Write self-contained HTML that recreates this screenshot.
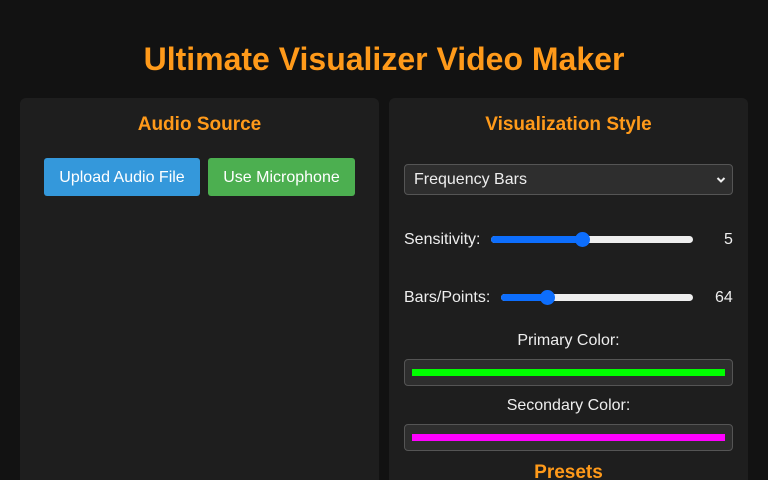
<!DOCTYPE html>
<html style="overflow:hidden;height:480px"><head><style>
*{margin:0;padding:0;box-sizing:border-box}
body{width:768px;height:480px;background:#121212;font-family:"Liberation Sans",sans-serif;color:#eee;position:relative;overflow:hidden}
.a{position:absolute}
.panel{position:absolute;top:98px;width:359px;height:382px;background:#1e1e1e;border-radius:6px 6px 0 0}
h1{position:absolute;top:41px;width:768px;text-align:center;font-size:32px;color:#ff9a1a;font-weight:bold}
.h2{position:absolute;width:359px;text-align:center;font-size:19px;font-weight:bold;color:#ff9a1a}
.btn{position:absolute;top:158px;height:38px;border-radius:3px;color:#fff;font-size:16px;line-height:39px;text-align:center}
.lbl{font-size:16px;color:#eee}
.track{position:absolute;height:7px;background:#eee;border-radius:4px}
.fill{position:absolute;height:7px;background:#0d6efd;border-radius:4px}
.thumb{position:absolute;width:15px;height:15px;border-radius:50%;background:#0d6efd}
.cbox{position:absolute;left:404px;width:329px;height:27px;background:#2e2e2e;border:1px solid #555;border-radius:4px}
.sw{position:absolute;left:7px;right:7px;top:9px;height:7px}
</style></head><body>
<h1>Ultimate Visualizer Video Maker</h1>
<div class="panel" style="left:20px"></div>
<div class="panel" style="left:389px"></div>
<div class="h2" style="left:20px;top:114px">Audio Source</div>
<div class="h2" style="left:389px;top:114px">Visualization Style</div>
<div class="btn" style="left:44px;width:156px;background:#3498db">Upload Audio File</div>
<div class="btn" style="left:208px;width:147px;background:#4caf50">Use Microphone</div>
<div class="a" style="left:404px;top:164px;width:329px;height:31px;background:#2e2e2e;border:1px solid #555;border-radius:4px;font-size:16px;line-height:30px;padding-left:9px">Frequency Bars
<svg class="a" style="right:6px;top:11px" width="10" height="8" viewBox="0 0 10 8"><path d="M1.5 2 L5 5.5 L8.5 2" stroke="#eee" stroke-width="2" fill="none"/></svg></div>
<div class="a lbl" style="left:404px;top:231px">Sensitivity:</div>
<div class="track" style="left:491px;top:236px;width:202px"></div>
<div class="fill" style="left:491px;top:236px;width:92px"></div>
<div class="thumb" style="left:575px;top:232px"></div>
<div class="a lbl" style="left:724px;top:231px">5</div>
<div class="a lbl" style="left:404px;top:289px">Bars/Points:</div>
<div class="track" style="left:501px;top:294px;width:192px"></div>
<div class="fill" style="left:501px;top:294px;width:46px"></div>
<div class="thumb" style="left:540px;top:290px"></div>
<div class="a lbl" style="left:715px;top:289px">64</div>
<div class="a lbl" style="left:389px;width:359px;text-align:center;top:332px">Primary Color:</div>
<div class="cbox" style="top:359px"><div class="sw" style="background:#00ff00"></div></div>
<div class="a lbl" style="left:389px;width:359px;text-align:center;top:397px">Secondary Color:</div>
<div class="cbox" style="top:424px"><div class="sw" style="background:#ff00ff"></div></div>
<div class="h2" style="left:389px;top:462px">Presets</div>
</body></html>
